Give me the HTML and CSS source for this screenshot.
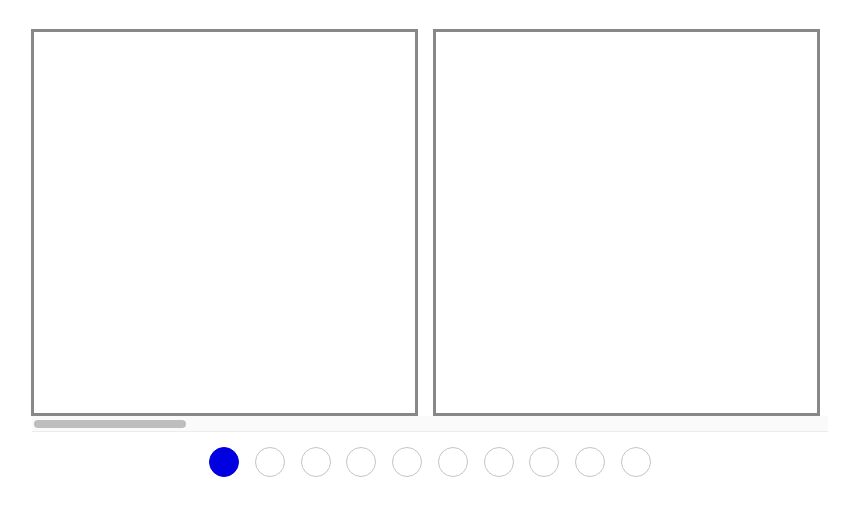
FILE: index.html
```html
<!DOCTYPE html>
<html>
<head>
<meta charset="utf-8">
<link rel="stylesheet" href="styles.css">
</head>
<body>
<div class="wrap">
  <div class="track">
    <div class="slide"></div>
    <div class="slide"></div>
    <div class="slide"></div>
    <div class="slide"></div>
    <div class="slide"></div>
    <div class="slide"></div>
    <div class="slide"></div>
    <div class="slide"></div>
    <div class="slide"></div>
    <div class="slide"></div>
  </div>
  <div class="scrollbar"><div class="thumb"></div></div>
  <div class="dots">
    <span class="dot active"></span>
    <span class="dot"></span>
    <span class="dot"></span>
    <span class="dot"></span>
    <span class="dot"></span>
    <span class="dot"></span>
    <span class="dot"></span>
    <span class="dot"></span>
    <span class="dot"></span>
    <span class="dot"></span>
  </div>
</div>
</body>
</html>
```

FILE: styles.css
```css
html, body {
  margin: 0;
  padding: 0;
  background: #fff;
  font-family: "Liberation Sans", Arial, sans-serif;
}
.wrap {
  width: 797px;
  margin: 29px 0 0 31px;
}
.track {
  display: flex;
  gap: 15px;
  overflow: hidden;
}
.slide {
  flex: 0 0 auto;
  width: 387px;
  height: 387px;
  box-sizing: border-box;
  border: 3px solid #888;
  background: #fff;
}
.scrollbar {
  margin-left: 1px;
  height: 16px;
  box-sizing: border-box;
  background: #fafafa;
  border-bottom: 1px solid #ececec;
  padding: 4px 0 0 2px;
}
.thumb {
  width: 152px;
  height: 8px;
  border-radius: 4px;
  background: #bebebe;
}
.dots {
  display: flex;
  justify-content: center;
  gap: 15.8px;
  margin-top: 15px;
  padding-left: 1px;
}
.dot {
  width: 30px;
  height: 30px;
  box-sizing: border-box;
  border-radius: 50%;
  border: 1px solid #c4c4c4;
  background: #fff;
}
.dot.active {
  background: #0000e0;
  border-color: #0000e0;
}
```
